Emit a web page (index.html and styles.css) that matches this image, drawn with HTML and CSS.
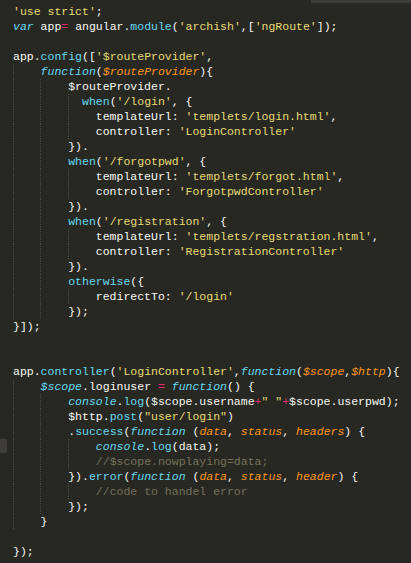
FILE: index.html
```html
<!DOCTYPE html>
<html>
<head>
	<meta charset="utf-8">
	<title>app.js</title>
	<link rel="stylesheet" href="styles.css">
</head>
<body>
	<div class="tabstrip"></div>
	<div class="code">
		<div class="ln"><span class="s">'use strict'</span>;</div>
		<div class="ln"><span class="k">var</span> app<span class="o">=</span> angular.<span class="f">module</span>(<span class="s">'archish'</span>,[<span class="s">'ngRoute'</span>]);</div>
		<div class="ln"> </div>
		<div class="ln">app.<span class="f">config</span>([<span class="s">'$routeProvider'</span>,</div>
		<div class="ln g1">    <span class="k">function</span>(<span class="p">$routeProvider</span>){</div>
		<div class="ln g2">        $routeProvider.</div>
		<div class="ln g3">          <span class="f">when</span>(<span class="s">'/login'</span>, {</div>
		<div class="ln g3">            templateUrl: <span class="s">'templets/login.html'</span>,</div>
		<div class="ln g3">            controller: <span class="s">'LoginController'</span></div>
		<div class="ln g2">        }).</div>
		<div class="ln g2">        <span class="f">when</span>(<span class="s">'/forgotpwd'</span>, {</div>
		<div class="ln g3">            templateUrl: <span class="s">'templets/forgot.html'</span>,</div>
		<div class="ln g3">            controller: <span class="s">'ForgotpwdController'</span></div>
		<div class="ln g2">        }).</div>
		<div class="ln g2">        <span class="f">when</span>(<span class="s">'/registration'</span>, {</div>
		<div class="ln g3">            templateUrl: <span class="s">'templets/regstration.html'</span>,</div>
		<div class="ln g3">            controller: <span class="s">'RegistrationController'</span></div>
		<div class="ln g2">        }).</div>
		<div class="ln g2">        <span class="f">otherwise</span>({</div>
		<div class="ln g3">            redirectTo: <span class="s">'/login'</span></div>
		<div class="ln g2">        });</div>
		<div class="ln">}]);</div>
		<div class="ln"> </div>
		<div class="ln"> </div>
		<div class="ln">app.<span class="f">controller</span>(<span class="s">'LoginController'</span>,<span class="k">function</span>(<span class="p">$scope</span>,<span class="p">$http</span>){</div>
		<div class="ln g1">    <span class="k">$scope</span>.loginuser <span class="o">=</span> <span class="k">function</span>() {</div>
		<div class="ln g2">        <span class="k">console</span>.<span class="f">log</span>($scope.username<span class="o">+</span><span class="s">" "</span><span class="o">+</span>$scope.userpwd);</div>
		<div class="ln g2">        $http.<span class="f">post</span>(<span class="s">"user/login"</span>)</div>
		<div class="ln g2">        .<span class="f">success</span>(<span class="k">function</span> (<span class="p">data</span>, <span class="p">status</span>, <span class="p">headers</span>) {</div>
		<div class="ln g3 mark">            <span class="k">console</span>.<span class="f">log</span>(data);</div>
		<div class="ln g3">            <span class="c">//$scope.nowplaying=data;</span></div>
		<div class="ln g2">        }).<span class="f">error</span>(<span class="k">function</span> (<span class="p">data</span>, <span class="p">status</span>, <span class="p">header</span>) {</div>
		<div class="ln g3">            <span class="c">//code to handel error</span></div>
		<div class="ln g2">        });</div>
		<div class="ln g1">    }</div>
		<div class="ln"> </div>
		<div class="ln">});</div>
	</div>
</body>
</html>
```

FILE: styles.css
```css
*{margin: 0;padding: 0;}
body {
	background: #272822;
	color: #f8f8f2;
	font: 11.5px/15px "Liberation Mono", "DejaVu Sans Mono", monospace;
	position: relative;
	height: 563px;
	overflow: hidden;
}
.tabstrip {
	position: absolute;
	top: 0;
	right: 0;
	width: 100px;
	height: 3px;
	background: #3b3b37;
}
.code {
	padding: 4px 0 0 13px;
}
.ln {
	white-space: pre;
	height: 15px;
	position: relative;
	background-repeat: no-repeat;
}
/* indent guides */
.g1 {
	background-image: linear-gradient(to bottom, #4c4b45 50%, transparent 50%);
	background-size: 1px 2px;
	background-repeat: repeat-y;
	background-position: 0 0;
}
.g2 {
	background-image:
		linear-gradient(to bottom, #4c4b45 50%, transparent 50%),
		linear-gradient(to bottom, #4c4b45 50%, transparent 50%);
	background-size: 1px 2px, 1px 2px;
	background-repeat: repeat-y;
	background-position: 0 0, 27px 0;
}
.g3 {
	background-image:
		linear-gradient(to bottom, #4c4b45 50%, transparent 50%),
		linear-gradient(to bottom, #4c4b45 50%, transparent 50%),
		linear-gradient(to bottom, #4c4b45 50%, transparent 50%);
	background-size: 1px 2px, 1px 2px, 1px 2px;
	background-repeat: repeat-y;
	background-position: 0 0, 27px 0, 55px 0;
}
.mark:before {
	content: "";
	position: absolute;
	left: -13px;
	top: 0;
	width: 7px;
	height: 14px;
	background: #3e3d38;
}
.s { color: #e6db74; }
.f { color: #66d9ef; }
.k { color: #66d9ef; font-style: italic; }
.p { color: #fd971f; font-style: italic; }
.o { color: #f92672; }
.c { color: #75715e; }
```
